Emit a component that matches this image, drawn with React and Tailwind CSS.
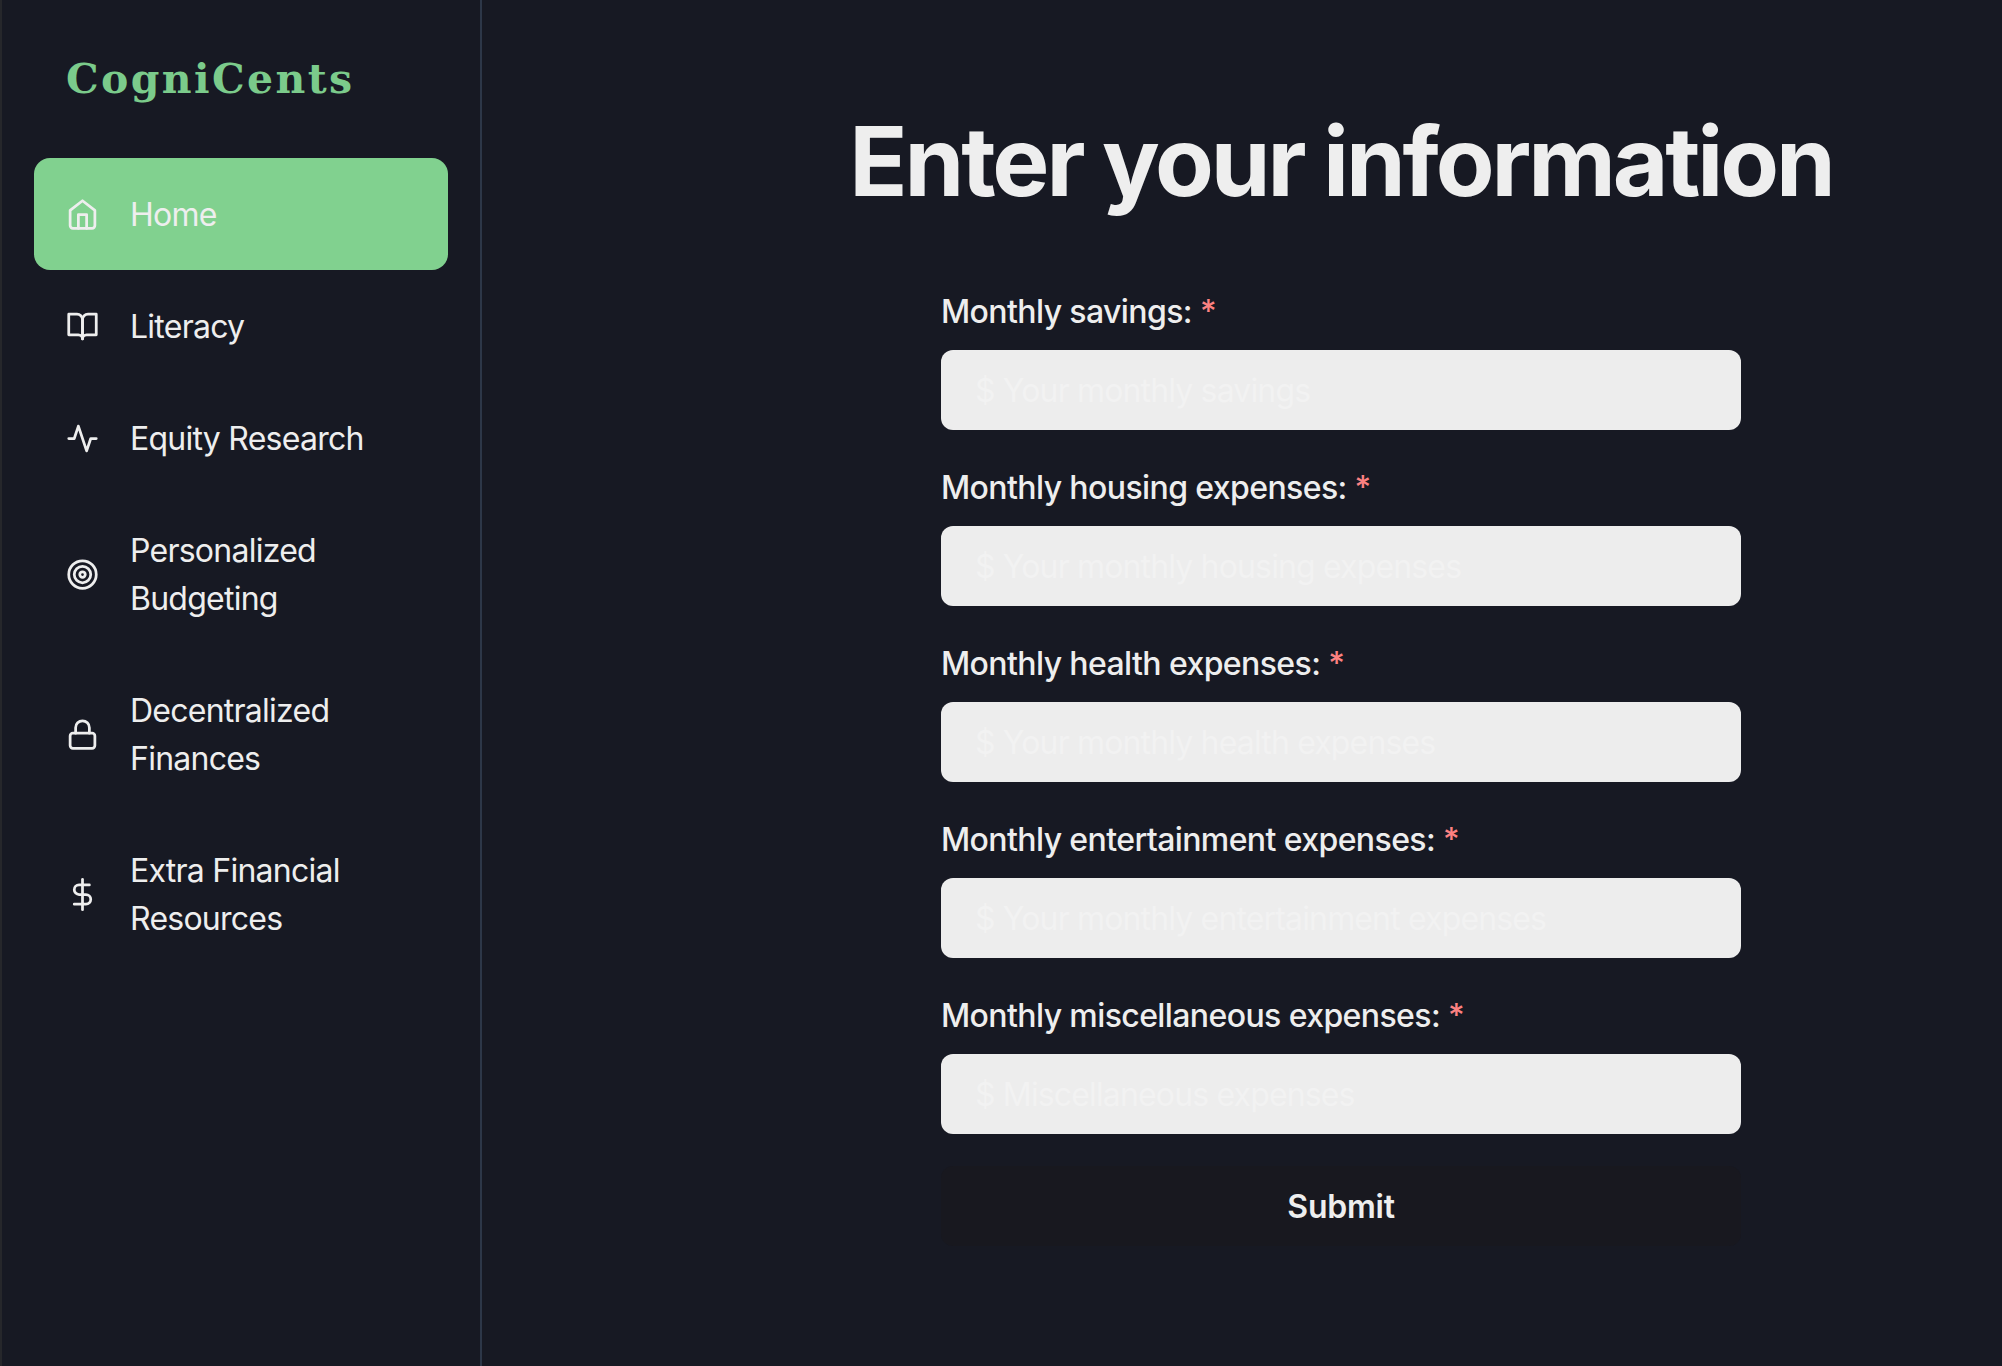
import React from 'react'
import { FiHome, FiBookOpen, FiActivity, FiTarget, FiLock, FiDollarSign } from 'react-icons/fi'

const navItems = [
  { label: 'Home', icon: FiHome, active: true },
  { label: 'Literacy', icon: FiBookOpen },
  { label: 'Equity Research', icon: FiActivity },
  { label: 'Personalized Budgeting', icon: FiTarget },
  { label: 'Decentralized Finances', icon: FiLock },
  { label: 'Extra Financial Resources', icon: FiDollarSign },
]

const fields = [
  { label: 'Monthly savings:', placeholder: '$ Your monthly savings' },
  { label: 'Monthly housing expenses:', placeholder: '$ Your monthly housing expenses' },
  { label: 'Monthly health expenses:', placeholder: '$ Your monthly health expenses' },
  { label: 'Monthly entertainment expenses:', placeholder: '$ Your monthly entertainment expenses' },
  { label: 'Monthly miscellaneous expenses:', placeholder: '$ Miscellaneous expenses' },
]

function NavItem({ label, icon: Icon, active }) {
  return (
    <a className={`flex items-center gap-[32px] mx-[32px] pl-[32px] pr-[32px] py-[32px] rounded-[16px] text-[32px] leading-[48px] tracking-[-0.75px] text-[#eeeeee] ${active ? 'bg-[#81d18f]' : ''}`}>
      <Icon size={33} className="shrink-0 -mx-[0.5px]" />
      <span className="pt-px -mb-px">{label}</span>
    </a>
  )
}

function Field({ label, placeholder }) {
  return (
    <div className="w-full">
      <label className="block pt-px mb-[14px] text-[32px] leading-[48px] font-medium tracking-[-0.6px] text-[#eeeeee]">
        {label} <span className="text-[#fc8181]">*</span>
      </label>
      <input
        placeholder={placeholder}
        className="block w-full h-[80px] px-[34px] rounded-[12px] bg-[#ededed] text-[32px] tracking-[-0.85px] outline-none placeholder:text-[#f2f2f2]"
      />
    </div>
  )
}

export default function App() {
  return (
    <div className="flex min-h-[1366px] bg-[#171923] font-['Inter',sans-serif]">
      <aside className="w-[482px] shrink-0 border-l-[2px] border-r-[2px] border-l-[#26272b] border-r-[#2d3748]">
        <div className="h-[158px] pl-[64px] pt-[54px] font-['DejaVu_Serif',serif] font-bold text-[41px] leading-[50px] tracking-[2.4px] text-[#7bcb8b]">
          CogniCents
        </div>
        <nav className="flex flex-col">
          {navItems.map((item) => (
            <NavItem key={item.label} {...item} />
          ))}
        </nav>
      </aside>

      <main className="flex-1 flex flex-col items-center pl-[198px] pt-[95px]">
        <h1 className="text-[96px] leading-[132px] font-bold tracking-[-3.1px] text-[#eeeeee] mb-[60px]">Enter your information</h1>
        <form className="w-[800px] flex flex-col gap-[33px]">
          {fields.map((f) => (
            <Field key={f.label} {...f} />
          ))}
          <button type="button" className="w-full h-[80px] -mt-px pt-[2px] rounded-[12px] bg-[#18181f] text-[32px] font-semibold tracking-[-0.25px] text-[#eeeeee]">
            Submit
          </button>
        </form>
      </main>
    </div>
  )
}
